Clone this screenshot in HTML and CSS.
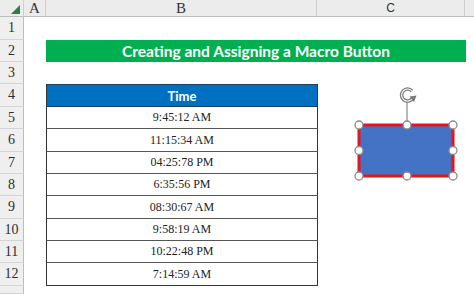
FILE: index.html
```html
<!DOCTYPE html>
<html lang="en">
<head>
    <meta charset="UTF-8">
    <title>Creating and Assigning a Macro Button</title>
    <link rel="stylesheet" href="styles.css">
</head>
<body>
<div class="sheet">
    <!-- column headers -->
    <div class="corner"><span class="corner-mark"></span></div>
    <div class="colhead">A</div>
    <div class="colhead">B</div>
    <div class="colhead sans">C</div>
    <div class="colhead last"></div>

    <!-- row headers -->
    <div class="rowhead r1">1</div>
    <div class="rowhead r2">2</div>
    <div class="rowhead r3">3</div>
    <div class="rowhead r4">4</div>
    <div class="rowhead r5">5</div>
    <div class="rowhead r6">6</div>
    <div class="rowhead r7">7</div>
    <div class="rowhead r8">8</div>
    <div class="rowhead r9">9</div>
    <div class="rowhead r10">10</div>
    <div class="rowhead r11">11</div>
    <div class="rowhead r12">12</div>
    <div class="rowhead r13"></div>

    <div class="title">Creating and Assigning a Macro Button</div>

    <div class="tcell thead r4">Time</div>
    <div class="tcell r5">9:45:12 AM</div>
    <div class="tcell r6">11:15:34 AM</div>
    <div class="tcell r7">04:25:78 PM</div>
    <div class="tcell r8">6:35:56 PM</div>
    <div class="tcell r9">08:30:67 AM</div>
    <div class="tcell r10">9:58:19 AM</div>
    <div class="tcell r11">10:22:48 PM</div>
    <div class="tcell r12">7:14:59 AM</div>

    <!-- selected macro button shape -->
    <svg class="shape" width="112" height="98" viewBox="0 0 112 98">
        <line x1="57" y1="16" x2="57" y2="39" stroke="#8a8a8a" stroke-width="1.2"/>
        <path d="M62 5 A6 6 0 1 0 62.8 12" fill="none" stroke="#7a7a7a" stroke-width="3.6"/>
        <path d="M62 5 A6 6 0 1 0 62.8 12" fill="none" stroke="#fff" stroke-width="1.1"/>
        <path d="M59.5 10.5 L66.5 9.5 L64 16 Z" fill="#7a7a7a"/>
        <rect x="9" y="39" width="94" height="51" fill="#4472c4" stroke="#e8141c" stroke-width="3"/>
        <g fill="#fff" stroke="#8a8a8a" stroke-width="1.3">
            <circle cx="9" cy="39" r="4"/>
            <circle cx="57" cy="39" r="4"/>
            <circle cx="103" cy="39" r="4"/>
            <circle cx="9" cy="64.5" r="4"/>
            <circle cx="103" cy="64.5" r="4"/>
            <circle cx="9" cy="90" r="4"/>
            <circle cx="57" cy="90" r="4"/>
            <circle cx="103" cy="90" r="4"/>
        </g>
    </svg>
</div>
</body>
</html>
```

FILE: styles.css
```css
body {
    margin: 0;
    background: #fff;
    font-family: "Liberation Serif", "Times New Roman", serif;
    color: #222;
}
.sheet {
    position: relative;
    width: 474px;
    height: 294px;
    overflow: hidden;
    display: grid;
    grid-template-columns: 24px 22px 271px 148px 1fr;
    grid-template-rows: 17px 23px 22px 22px 23px 22px 23px 22px 22px 23px 22px 22px 23px 1fr;
}
.corner,
.colhead {
    box-sizing: border-box;
    background: #ececec;
    border-right: 1px solid #cfcfcf;
    border-bottom: 1px solid #bdbdbd;
    font-size: 15px;
    color: #333;
    display: flex;
    align-items: center;
    justify-content: center;
}
.colhead.sans {
    font-family: "Liberation Sans", Arial, sans-serif;
    font-size: 12px;
}
.colhead.last {
    border-right: none;
}
.corner {
    position: relative;
}
.corner-mark {
    position: absolute;
    right: 3px;
    bottom: 2px;
    width: 0;
    height: 0;
    border-left: 9px solid transparent;
    border-bottom: 9px solid #2f7d45;
}
.rowhead {
    grid-column: 1;
    box-sizing: border-box;
    background: #efefef;
    border-right: 1px solid #bdbdbd;
    border-bottom: 1px solid #d4d4d4;
    font-size: 14px;
    color: #2e2e2e;
    display: flex;
    align-items: center;
    justify-content: center;
}
.r1 { grid-row: 2; }
.r2 { grid-row: 3; }
.r3 { grid-row: 4; }
.r4 { grid-row: 5; }
.r5 { grid-row: 6; }
.r6 { grid-row: 7; }
.r7 { grid-row: 8; }
.r8 { grid-row: 9; }
.r9 { grid-row: 10; }
.r10 { grid-row: 11; }
.r11 { grid-row: 12; }
.r12 { grid-row: 13; }
.r13 { grid-row: 14; }
.title {
    grid-column: 3 / 5;
    grid-row: 3;
    margin-right: -1px;
    background: #00b050;
    color: #fff;
    font-family: Lato, "Liberation Sans", sans-serif;
    font-weight: bold;
    font-size: 15.5px;
    display: flex;
    align-items: center;
    justify-content: center;
}
.tcell {
    grid-column: 3;
    box-sizing: border-box;
    margin-right: -1px;
    border-left: 1.5px solid #333;
    border-right: 1.5px solid #333;
    border-bottom: 1px solid #555;
    font-size: 12px;
    display: flex;
    align-items: center;
    justify-content: center;
}
.tcell.r12 {
    border-bottom: 1.5px solid #333;
}
.tcell.thead {
    background: #0070c0;
    border-top: 1px solid #1f3f66;
    border-bottom: 1px solid #1f3f66;
    color: #fff;
    font-family: Lato, "Liberation Sans", sans-serif;
    font-weight: bold;
    font-size: 13px;
}
.shape {
    position: absolute;
    left: 350px;
    top: 86px;
}
```
